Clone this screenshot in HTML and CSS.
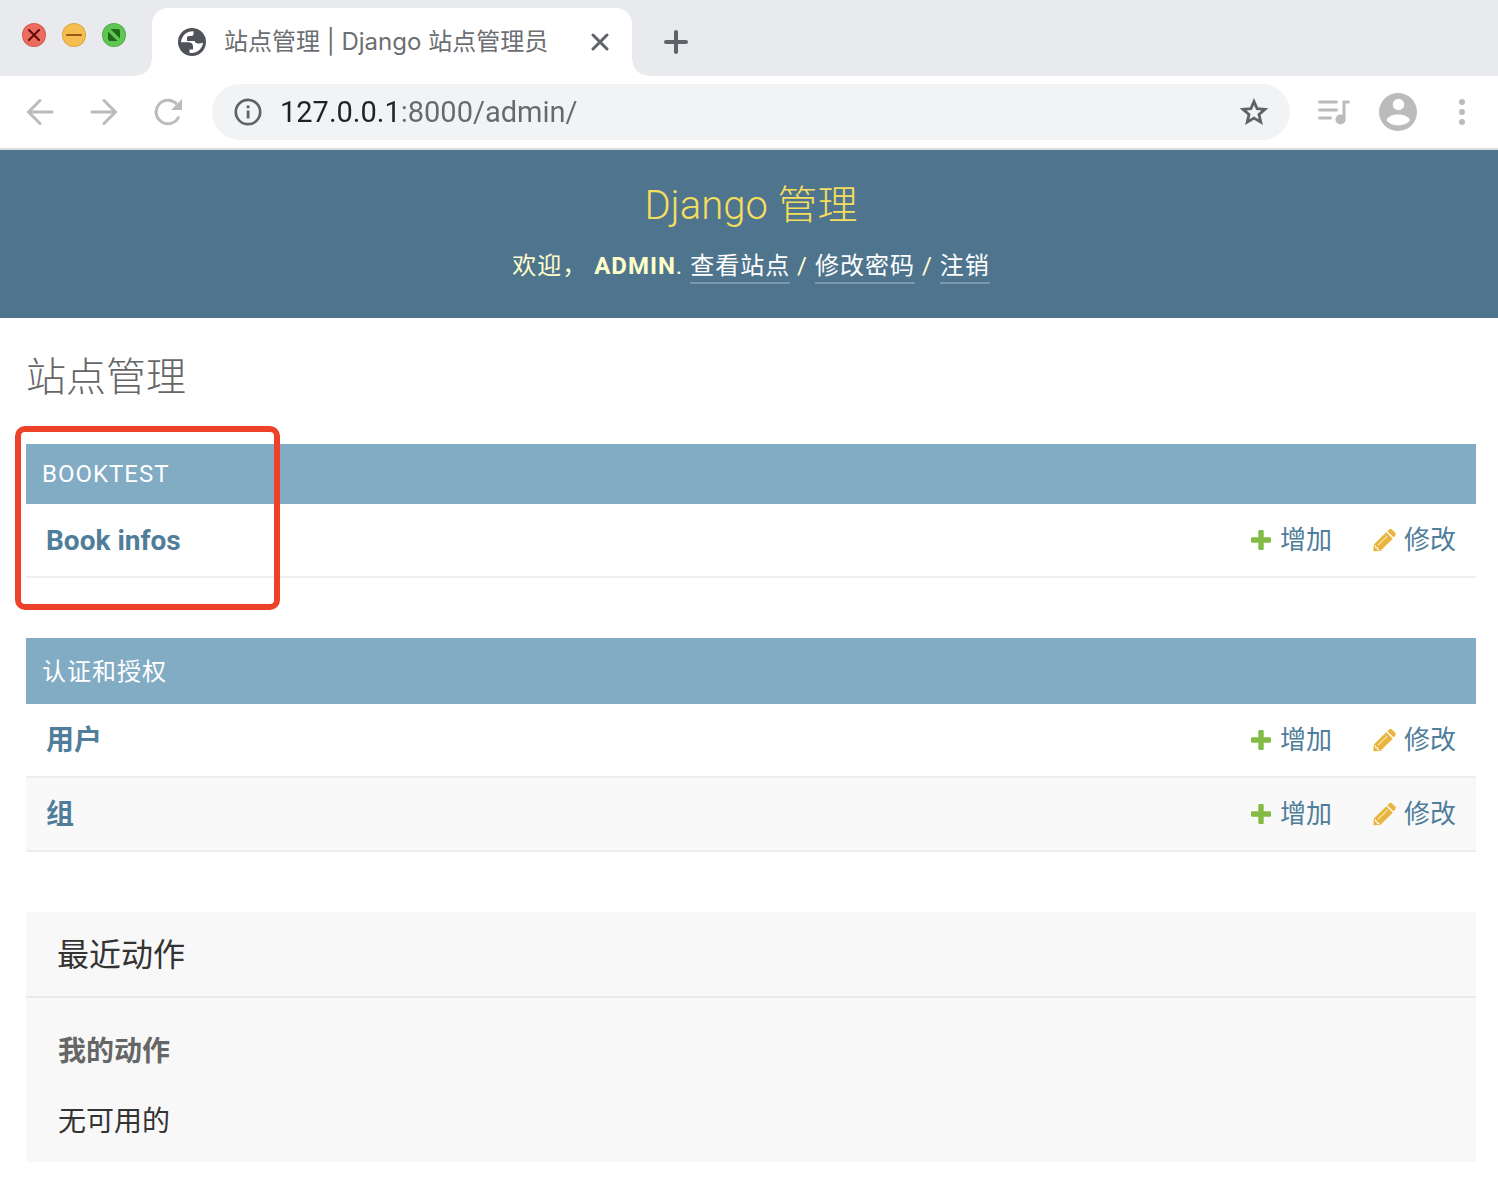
FILE: index.html
```
<!DOCTYPE html>
<html lang="zh-CN">
<head>
    <meta charset="UTF-8">
    <meta name="viewport" content="width=device-width, initial-scale=1.0">
    <title>站点管理 | Django 站点管理员</title>
    <link rel="stylesheet" href="styles.css">
</head>
<body>

    <svg class="sprite" aria-hidden="true">
        <symbol id="icon-add" viewBox="0 0 22 22">
            <path fill="#84bb45" d="M9.500 1h3q1.200 0 1.200 1.200v6.100h6.100q1.200 0 1.200 1.200v3q0 1.200-1.200 1.200h-6.100v6.100q0 1.200-1.200 1.200h-3q-1.200 0-1.200-1.200v-6.100H2.200Q1 13.700 1 12.500v-3q0-1.200 1.200-1.200h6.100V2.200Q8.300 1 9.500 1z"/>
        </symbol>
        <symbol id="icon-edit" viewBox="0 0 24 24">
            <path fill="#e8b63f" d="M14.300 4.200l6.500 6.500L8.500 22.700l-6.500.6q-.8 0-.7-.8L2 16.200z"/>
            <path fill="#e8b63f" d="M15.300 3.200l2-2q1.200-1 2.400 0l3.600 3.600q1 1.200 0 2.400l-1.600 2.300z"/>
            <path fill="none" stroke="#fff" stroke-width="1" d="M6 17.200L15.500 8M3.500 17.500v1.800l1.800.2v2h2"/>
        </symbol>
    </svg>

    <div class="browser">
        <div class="tab-bar">
            <div class="window-controls">
                <button class="dot dot-close" aria-label="关闭窗口">
                    <svg viewBox="0 0 24 24"><path d="M7 7l10 10M17 7L7 17" stroke="#5c0b08" stroke-width="2" stroke-linecap="round"/></svg>
                </button>
                <button class="dot dot-min" aria-label="最小化">
                    <svg viewBox="0 0 24 24"><path d="M5 12h14" stroke="#975a1b" stroke-width="2" stroke-linecap="round"/></svg>
                </button>
                <button class="dot dot-max" aria-label="全屏">
                    <svg viewBox="0 0 24 24"><path d="M8.500 6H16q2 0 2 2v7.500zM6 8.500V16q0 2 2 2h7.500z" fill="#1f6a17"/></svg>
                </button>
            </div>
            <div class="tab">
                <svg class="tab-icon" viewBox="0 0 28 28">
                    <circle cx="14" cy="14" r="14" fill="#50535a"/>
                    <path fill="#fff" d="M15.500 3.200C9 2.800 3.500 7.500 3 14.300h7.500c2.700 0 4.500 1.500 4.500 4v3.200h-3.500v3.200c6.500 1.300 13-3.200 13.500-10.200-1.200.6-2.700 1-5 1-2 0-3.200-.9-3.200-2.500H9V9.800C9 8.500 10 8 11.500 8h2c1.300 0 2-.7 2-2z"/>
                </svg>
                <span class="tab-title">站点管理 | Django 站点管理员</span>
                <button class="icon-btn tab-close" aria-label="关闭标签页">
                    <svg width="18" height="18" viewBox="0 0 18 18"><path d="M2 2l14 14M16 2L2 16" stroke="#5f6368" stroke-width="3" stroke-linecap="round"/></svg>
                </button>
            </div>
            <button class="icon-btn new-tab" aria-label="新标签页">
                <svg width="24" height="24" viewBox="0 0 24 24"><path d="M12 2v20M2 12h20" stroke="#5f6368" stroke-width="4" stroke-linecap="round"/></svg>
            </button>
        </div>

        <div class="toolbar">
            <div class="nav-buttons">
                <button class="icon-btn" aria-label="后退">
                    <svg width="28" height="28" viewBox="0 0 28 28"><path d="M26 14H3M14 2.500L2.500 14 14 25.500" fill="none" stroke="#b9bbbd" stroke-width="3" stroke-linecap="round"/></svg>
                </button>
                <button class="icon-btn" aria-label="前进">
                    <svg width="28" height="28" viewBox="0 0 28 28"><path d="M2 14h23M14 2.500L25.500 14 14 25.500" fill="none" stroke="#b9bbbd" stroke-width="3" stroke-linecap="round"/></svg>
                </button>
                <button class="icon-btn" aria-label="重新加载">
                    <svg width="28" height="28" viewBox="0 0 28 28"><path d="M24.800 18.500A11.800 11.800 0 1 1 22.800 6.200" fill="none" stroke="#b9bbbd" stroke-width="3"/><path d="M28 1v11H17z" fill="#b9bbbd"/></svg>
                </button>
            </div>
            <div class="address-bar">
                <svg width="28" height="28" viewBox="0 0 28 28"><circle cx="14" cy="14" r="12.200" fill="none" stroke="#5f6368" stroke-width="2.700"/><path d="M12.700 7.500h2.800v2.800h-2.800zM12.700 12.500h2.800v8h-2.800z" fill="#5f6368"/></svg>
                <input class="address" type="text" value="127.0.0.1:8000/admin/" aria-label="地址">
                <button class="icon-btn" aria-label="收藏">
                    <svg width="30" height="28" viewBox="0 0 30 28"><path d="M15 3.500l3.100 7.100 7.900.7-6 5.200 1.800 7.700-6.800-4.100-6.800 4.100L10 16.500l-6-5.200 7.900-.7z" fill="none" stroke="#5f6368" stroke-width="2.800"/></svg>
                </button>
            </div>
            <div class="tools">
                <button class="icon-btn" aria-label="媒体">
                    <svg width="32" height="26" viewBox="0 0 32 26"><path d="M1.500 3h17M1.500 11h17M1.500 19h11" stroke="#b9bbbd" stroke-width="3" stroke-linecap="round"/><path d="M30.500 3H26v17" fill="none" stroke="#b9bbbd" stroke-width="3" stroke-linecap="round"/><circle cx="22.500" cy="20.500" r="5" fill="#b9bbbd"/></svg>
                </button>
                <button class="icon-btn" aria-label="用户">
                    <svg width="38" height="38" viewBox="0 0 38 38"><circle cx="19" cy="19" r="19" fill="#b9bbbd"/><circle cx="19.500" cy="11.500" r="5.700" fill="#fff"/><path d="M7.500 27C10.500 19.700 28 19.700 31 27 27.500 34 11 34 7.500 27z" fill="#fff"/></svg>
                </button>
                <button class="icon-btn" aria-label="菜单">
                    <svg width="6" height="28" viewBox="0 0 6 28"><g fill="#b9bbbd"><circle cx="3" cy="4" r="3"/><circle cx="3" cy="14" r="3"/><circle cx="3" cy="24" r="3"/></g></svg>
                </button>
            </div>
        </div>
    </div>

    <header class="header">
        <h1 class="site-name"><a href="#">Django 管理</a></h1>
        <div class="user-tools">
            欢迎， <strong>ADMIN</strong>.
            <a href="#">查看站点</a> / <a href="#">修改密码</a> / <a href="#">注销</a>
        </div>
    </header>

    <main class="content">
        <h1 class="page-title">站点管理</h1>

        <div class="module">
            <table>
                <caption><a href="#">BOOKTEST</a></caption>
                <tr>
                    <th scope="row"><a href="#">Book infos</a></th>
                    <td><a class="action" href="#"><svg class="add-icon"><use href="#icon-add"/></svg>增加</a></td>
                    <td><a class="action" href="#"><svg class="edit-icon"><use href="#icon-edit"/></svg>修改</a></td>
                </tr>
            </table>
            <div class="highlight"></div>
        </div>

        <div class="module">
            <table>
                <caption class="caption-zh"><a href="#">认证和授权</a></caption>
                <tr>
                    <th scope="row"><a href="#">用户</a></th>
                    <td><a class="action" href="#"><svg class="add-icon"><use href="#icon-add"/></svg>增加</a></td>
                    <td><a class="action" href="#"><svg class="edit-icon"><use href="#icon-edit"/></svg>修改</a></td>
                </tr>
                <tr>
                    <th scope="row"><a href="#">组</a></th>
                    <td><a class="action" href="#"><svg class="add-icon"><use href="#icon-add"/></svg>增加</a></td>
                    <td><a class="action" href="#"><svg class="edit-icon"><use href="#icon-edit"/></svg>修改</a></td>
                </tr>
            </table>
        </div>

        <div class="recent-actions">
            <h2>最近动作</h2>
            <h3>我的动作</h3>
            <p>无可用的</p>
        </div>
    </main>

</body>
</html>
```
FILE: styles.css
```
/* Global Styles */
* {
    box-sizing: border-box;
}

body {
    margin: 0;
    background: #fff;
    color: #333;
    font-family: Roboto, "Noto Sans CJK SC", sans-serif;
    font-size: 28px;
}

a {
    color: #4f7d9a;
    text-decoration: none;
}

svg {
    display: block;
    flex: none;
}

.sprite {
    position: absolute;
    width: 0;
    height: 0;
}

/* Browser Window */
.browser {
    border-bottom: 2px solid #dadce0;
}

.icon-btn {
    padding: 0;
    border: none;
    background: none;
    cursor: pointer;
}

.tab-bar {
    display: flex;
    height: 76px;
    padding-top: 8px;
    background: #e8eaed;
}

.window-controls {
    display: flex;
    gap: 16px;
    width: 152px;
    padding: 15px 22px;
}

.dot {
    width: 24px;
    height: 24px;
    padding: 0;
    border: none;
    border-radius: 50%;
    box-shadow: inset 0 0 0 1px rgba(0, 0, 0, 0.12);
}

.dot-close {
    background: #ed6a5e;
}

.dot-min {
    background: #f5bf4f;
}

.dot-max {
    background: #61c554;
}

.tab {
    position: relative;
    display: flex;
    align-items: center;
    width: 480px;
    padding: 0 23px 0 26px;
    border-radius: 16px 16px 0 0;
    background: #fff;
}

/* Curved feet of the tab */
.tab::before,
.tab::after {
    content: "";
    position: absolute;
    bottom: 0;
    width: 16px;
    height: 16px;
}

.tab::before {
    left: -16px;
    background: radial-gradient(circle at 0 0, #e8eaed 15px, #fff 16px);
}

.tab::after {
    right: -16px;
    background: radial-gradient(circle at 100% 0, #e8eaed 15px, #fff 16px);
}

.tab-icon {
    width: 28px;
    height: 28px;
}

.tab-title {
    flex: 1;
    margin-left: 18px;
    color: #6b6e72;
    font-family: Inter, "Noto Sans CJK SC", sans-serif;
    font-size: 24px;
    line-height: 32px;
    white-space: nowrap;
}

.new-tab {
    margin-left: 32px;
}

/* Toolbar */
.toolbar {
    display: flex;
    align-items: center;
    height: 72px;
    padding: 0 33px 0 26px;
}

.nav-buttons {
    display: flex;
    gap: 36px;
}

.address-bar {
    display: flex;
    flex: 1;
    align-items: center;
    height: 56px;
    margin: 0 28px 0 30px;
    padding: 0 21px 0 22px;
    border-radius: 28px;
    background: #f1f3f4;
}

/* The host part of the address is darker than the path */
.address {
    flex: 1;
    min-width: 0;
    margin-left: 18px;
    padding: 0;
    border: none;
    outline: none;
    background: linear-gradient(to right, #202124 120px, #66696d 120px);
    background-clip: text;
    -webkit-background-clip: text;
    color: transparent;
    font-family: Roboto, sans-serif;
    font-size: 29px;
}

.tools {
    display: flex;
    align-items: center;
    gap: 36px;
}

.tools .icon-btn:nth-child(2) {
    margin-left: -7px;
    margin-right: 6px;
}

/* Header */
.header {
    padding: 32px 38px 32px 42px;
    background: #4f758e;
    color: #ffffcc;
    text-align: center;
}

.site-name {
    margin: 0 0 16px;
    font-size: 40px;
    font-weight: 300;
    line-height: 48px;
}

.site-name a {
    color: #f5dd5d;
}

.user-tools {
    font-size: 24px;
    letter-spacing: 1px;
    line-height: 40px;
}

.user-tools a {
    padding-bottom: 2px;
    border-bottom: 2px solid rgba(255, 255, 255, 0.25);
    color: #fff;
}

/* Content */
.content {
    padding: 34px 22px 32px 26px;
}

.page-title {
    margin: 0 0 40px;
    color: #666;
    font-size: 40px;
    font-weight: 300;
    line-height: 52px;
}

.module {
    position: relative;
    margin-bottom: 60px;
}

table {
    width: 100%;
    border-spacing: 0;
}

caption {
    padding: 16px;
    background: #82abc4;
    font-size: 24px;
    letter-spacing: 1px;
    line-height: 28px;
    text-align: left;
}

.caption-zh {
    padding: 17px 16px 15px;
    line-height: 34px;
}

caption a {
    color: #fff;
}

tr:nth-child(even) {
    background: #f9f9f9;
}

th,
td {
    height: 74px;
    padding: 0 20px;
    border-bottom: 2px solid #eee;
    line-height: 36px;
    text-align: left;
}

th {
    width: 100%;
    padding-top: 2px;
    font-size: 28px;
    font-weight: 700;
}

td {
    font-size: 26px;
    white-space: nowrap;
}

.action {
    display: flex;
    align-items: center;
    gap: 8px;
}

.add-icon {
    width: 22px;
    height: 22px;
}

.edit-icon {
    width: 24px;
    height: 24px;
}

/* Red frame around the first app */
.highlight {
    position: absolute;
    top: -18px;
    left: -11px;
    width: 265px;
    height: 184px;
    border: 6px solid #ed4129;
    border-radius: 10px;
    pointer-events: none;
}

/* Recent Actions */
.recent-actions {
    padding-bottom: 19px;
    background: #f8f8f8;
}

.recent-actions h2 {
    margin: 0 0 33px;
    padding: 21px 31px 19px;
    border-bottom: 2px solid #eaeaea;
    font-size: 32px;
    font-weight: 400;
    line-height: 44px;
}

.recent-actions h3 {
    margin: 0 32px 28px;
    color: #666;
    font-size: 28px;
    line-height: 42px;
}

.recent-actions p {
    margin: 0 32px;
    line-height: 42px;
}
```
